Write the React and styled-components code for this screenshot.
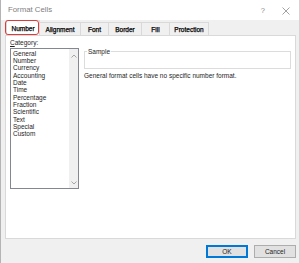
import styled, { createGlobalStyle } from 'styled-components';

const Global = createGlobalStyle`
	body {
		margin: 0;
		background: #ffffff;
		font-family: 'Liberation Sans', Arial, sans-serif;
	}
`;

const categories = [
	'General',
	'Number',
	'Currency',
	'Accounting',
	'Date',
	'Time',
	'Percentage',
	'Fraction',
	'Scientific',
	'Text',
	'Special',
	'Custom',
];

// label + width of each tab as seen in the dialog
const tabs = [
	['Number', 34],
	['Alignment', 42],
	['Font', 29],
	['Border', 34],
	['Fill', 29],
	['Protection', 40],
];

export default function App() {
	return (
		<>
			<Global />
			<Window>
				<TitleBar>
					<Title>Format Cells</Title>
					<TitleButtons>
						<span>?</span>
						<svg width='8' height='8' viewBox='0 0 8 8'>
							<path d='M0.5 0.5 L7.5 7.5 M7.5 0.5 L0.5 7.5' stroke='#8a8a8a' strokeWidth='0.8' />
						</svg>
					</TitleButtons>
				</TitleBar>
				<TabRow>
					{tabs.map(([t, w], i) => (
						<Tab key={t} active={i === 0} $w={w}>
							{t}
						</Tab>
					))}
				</TabRow>
				<Panel>
					<LeftCol>
						<Label>
							<u>C</u>ategory:
						</Label>
						<ListBox>
							<Items>
								{categories.map((c) => (
									<li key={c}>{c}</li>
								))}
							</Items>
							<ScrollBar>
								<Arrow>
									<svg width='6' height='4' viewBox='0 0 6 4'>
										<path d='M0.5 3.5 L3 1 L5.5 3.5' fill='none' stroke='#a6a6a6' strokeWidth='1' />
									</svg>
								</Arrow>
								<Arrow>
									<svg width='6' height='4' viewBox='0 0 6 4'>
										<path d='M0.5 0.5 L3 3 L5.5 0.5' fill='none' stroke='#a6a6a6' strokeWidth='1' />
									</svg>
								</Arrow>
							</ScrollBar>
						</ListBox>
					</LeftCol>
					<RightCol>
						<Group>
							<legend>Sample</legend>
						</Group>
						<Desc>General format cells have no specific number format.</Desc>
					</RightCol>
				</Panel>
				<Footer>
					<Button primary>OK</Button>
					<Button>Cancel</Button>
				</Footer>
			</Window>
		</>
	);
}

const Window = styled.div`
	width: 300px;
	height: 263px;
	box-sizing: border-box;
	background: #f0f0f0;
	border-left: 1px solid #b4b4b4;
	border-right: 1px solid #d4d4d4;
	display: flex;
	flex-direction: column;
	overflow: hidden;
`;

const TitleBar = styled.div`
	height: 20px;
	flex-shrink: 0;
	display: flex;
	align-items: center;
	justify-content: space-between;
	padding: 0 9px 2px 7px;
	box-sizing: border-box;
	background: #ffffff;
`;

const Title = styled.span`
	font-size: 7.8px;
	color: #808080;
`;

const TitleButtons = styled.div`
	display: flex;
	align-items: center;
	gap: 17px;
	font-size: 7.5px;
	color: #8a8a8a;
	padding-top: 3px;
`;

const TabRow = styled.div`
	display: flex;
	flex-shrink: 0;
	padding: 0 0 0 5px;
	height: 15px;
	align-items: flex-end;
	background: #f0f0f0;
`;

const Tab = styled.div`
	position: relative;
	box-sizing: border-box;
	width: ${(p) => p.$w}px;
	height: ${(p) => (p.active ? '15px' : '13px')};
	margin-right: -1px;
	display: flex;
	align-items: center;
	justify-content: center;
	font-size: 6.5px;
	color: #000000;
	-webkit-text-stroke: 0.25px #000;
	background: ${(p) => (p.active ? '#ffffff' : '#f0f0f0')};
	border: 1px solid #d9d9d9;
	border-bottom: none;
	z-index: ${(p) => (p.active ? 2 : 1)};
	&::after {
		content: '';
		display: ${(p) => (p.active ? 'block' : 'none')};
		position: absolute;
		left: -2px;
		top: -1px;
		right: 0px;
		bottom: 0px;
		border: 1.3px solid #e0393a;
		border-radius: 3px;
	}
`;

const Panel = styled.div`
	height: 204px;
	flex-shrink: 0;
	box-sizing: border-box;
	margin: 0 3px 0 4px;
	background: #ffffff;
	border: 1px solid #d9d9d9;
	display: flex;
	padding: 3px 4px 0 4px;
	gap: 5px;
`;

const LeftCol = styled.div`
	display: flex;
	flex-direction: column;
	width: 69px;
`;

const Label = styled.div`
	font-size: 6.5px;
	color: #1e1e1e;
	height: 9px;
	line-height: 8px;
	u {
		text-decoration: underline;
	}
`;

const ListBox = styled.div`
	display: flex;
	height: 141px;
	border: 1px solid #828790;
	box-sizing: border-box;
	background: #fff;
`;

const Items = styled.ul`
	flex: 1;
	list-style: none;
	margin: 0;
	padding: 0.5px 0 0 2px;
	font-size: 6.5px;
	line-height: 7.36px;
	color: #1e1e1e;
`;

const ScrollBar = styled.div`
	width: 9px;
	background: #f0f0f0;
	display: flex;
	flex-direction: column;
	justify-content: space-between;
	padding: 2px 0 1px;
`;

const Arrow = styled.div`
	height: 9px;
	display: flex;
	align-items: center;
	justify-content: center;
`;

const RightCol = styled.div`
	flex: 1;
	padding-top: 9px;
	display: flex;
	flex-direction: column;
`;

const Group = styled.fieldset`
	margin: 0;
	height: 21px;
	box-sizing: border-box;
	border: 1px solid #dcdcdc;
	padding: 0 2px;
	legend {
		font-size: 6.5px;
		color: #1e1e1e;
		padding: 0 1px;
		margin-left: 0;
	}
`;

const Desc = styled.div`
	margin-top: 3px;
	font-size: 6.5px;
	color: #1e1e1e;
`;

const Footer = styled.div`
	flex: 1;
	display: flex;
	justify-content: flex-end;
	align-items: center;
	gap: 6px;
	padding: 0 3px 0 0;
`;

const Button = styled.button`
	width: 42px;
	height: 13px;
	box-sizing: border-box;
	padding: 0;
	font-family: inherit;
	font-size: 6.5px;
	color: #1e1e1e;
	background: #e1e1e1;
	border: 1px solid ${(p) => (p.primary ? '#0078d7' : '#adadad')};
	box-shadow: ${(p) => (p.primary ? 'inset 0 0 0 1px #0078d7' : 'none')};
`;
